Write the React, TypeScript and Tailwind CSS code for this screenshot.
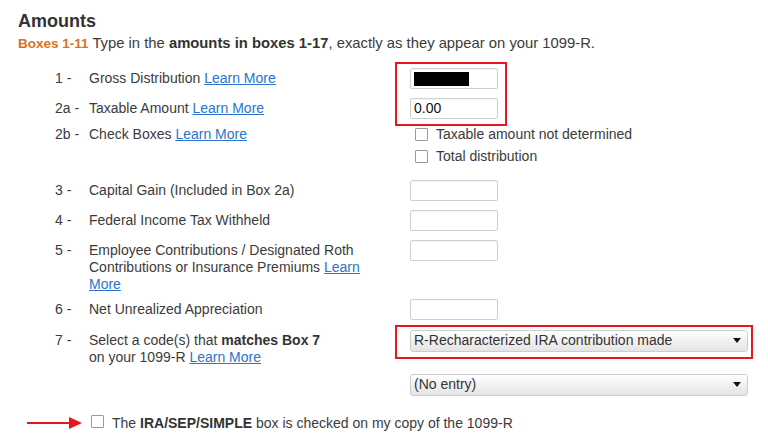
import React from "react";

const Link = ({ children }: { children: React.ReactNode }) => (
  <a href="#" className="text-[#2a74cf] underline underline-offset-[1px]">
    {children}
  </a>
);

const Input = ({ children }: { children?: React.ReactNode }) => (
  <div className="w-[88px] h-[21px] border border-[#cfcfcf] rounded-[2px] bg-white flex items-center px-[3px] text-[14px] text-[#111] shadow-[inset_0_1px_1px_rgba(0,0,0,0.04)]">
    {children}
  </div>
);

const Check = () => (
  <span className="inline-block w-[13px] h-[13px] border border-[#9a9a9a] rounded-[1px] bg-white shrink-0" />
);

const Select = ({ children }: { children: React.ReactNode }) => (
  <div className="w-[338px] h-[22px] border border-[#cdcdcd] rounded-[3px] bg-gradient-to-b from-[#ffffff] to-[#e4e4e4] flex items-center justify-between pl-[3px] pr-[6px] text-[14px] text-[#333]">
    <span>{children}</span>
    <svg width="8" height="5" viewBox="0 0 8 5">
      <path d="M0 0 L8 0 L4 5 Z" fill="#111" />
    </svg>
  </div>
);

const Row = ({
  num,
  label,
  children,
  className = "",
  labelPad = "pt-[2px]",
}: {
  num: string;
  label: React.ReactNode;
  children?: React.ReactNode;
  className?: string;
  labelPad?: string;
}) => (
  <div className={`flex items-start ${className}`}>
    <div className={`w-[34px] shrink-0 ${labelPad}`}>{num}</div>
    <div className={`w-[280px] shrink-0 ${labelPad}`}>{label}</div>
    <div className="ml-[41px]">{children}</div>
  </div>
);

export default function App() {
  return (
    <div
      className="relative w-[768px] h-[445px] bg-white overflow-hidden pl-[18px] pt-[10px] text-[14px] leading-[17px] text-[#3b3b3b]"
      style={{ fontFamily: '"Liberation Sans", Arial, sans-serif' }}
    >
      <h1 className="text-[18px] leading-[22px] font-bold text-[#333]">Amounts</h1>
      <p className="mt-[2.5px] text-[14.8px] text-[#3b3b3b]">
        <span className="font-bold text-[13.5px] text-[#d9721c]">Boxes 1-11</span> Type in the{" "}
        <b className="text-[#333]">amounts in boxes 1-17</b>, exactly as they appear on your 1099-R.
      </p>

      <div className="ml-[37px] mt-[16.5px]">
        <Row num="1 -" label={<>Gross Distribution <Link>Learn More</Link></>}>
          <Input>
            <span className="block w-[55px] h-[14px] bg-black" />
          </Input>
        </Row>
        <Row num="2a -" className="mt-[9px]" label={<>Taxable Amount <Link>Learn More</Link></>}>
          <Input>0.00</Input>
        </Row>
        <Row
          num="2b -"
          className="mt-[7px]"
          labelPad="pt-0"
          label={<>Check Boxes <Link>Learn More</Link></>}
        >
          <div className="flex flex-col gap-[5px] pl-[5px]">
            <label className="flex items-center gap-[8px] h-[17px]">
              <Check />
              <span>Taxable amount not determined</span>
            </label>
            <label className="flex items-center gap-[8px] h-[17px]">
              <Check />
              <span>Total distribution</span>
            </label>
          </div>
        </Row>
        <Row num="3 -" className="mt-[15px]" label="Capital Gain (Included in Box 2a)">
          <Input />
        </Row>
        <Row num="4 -" className="mt-[9px]" label="Federal Income Tax Withheld">
          <Input />
        </Row>
        <Row
          num="5 -"
          className="mt-[9px]"
          label={
            <>
              Employee Contributions / Designated Roth Contributions or Insurance Premiums{" "}
              <Link>Learn More</Link>
            </>
          }
        >
          <Input />
        </Row>
        <Row num="6 -" className="mt-[6px]" label="Net Unrealized Appreciation">
          <Input />
        </Row>
        <Row
          num="7 -"
          className="mt-[9.5px]"
          labelPad="pt-[2.5px]"
          label={
            <>
              Select a code(s) that <b className="text-[#333]">matches Box 7</b>
              <br />
              on your 1099-R <Link>Learn More</Link>
            </>
          }
        >
          <Select>R-Recharacterized IRA contribution made</Select>
          <div className="mt-[22px]">
            <Select>(No entry)</Select>
          </div>
        </Row>
      </div>

      <div className="mt-[19px] flex items-center ml-[9px]">
        <svg width="55" height="12" viewBox="0 0 55 12" className="shrink-0">
          <line x1="0" y1="6" x2="44" y2="6" stroke="#e4161b" strokeWidth="2" />
          <path d="M42 0 L55 6 L42 12 Z" fill="#e4161b" />
        </svg>
        <span className="ml-[9px]">
          <Check />
        </span>
        <span className="ml-[8px]">
          The <b className="text-[#333]">IRA/SEP/SIMPLE</b> box is checked on my copy of the 1099-R
        </span>
      </div>

      <div className="absolute left-[395px] top-[62px] w-[112px] h-[64px] border-2 border-[#e8161e] pointer-events-none" />
      <div className="absolute left-[395px] top-[325px] w-[358px] h-[34px] border-2 border-[#e8161e] pointer-events-none" />
    </div>
  );
}
